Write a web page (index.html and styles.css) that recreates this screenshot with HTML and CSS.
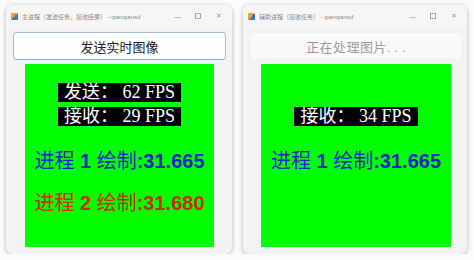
FILE: index.html
```html
<!DOCTYPE html>
<html lang="zh-CN">
<head>
    <meta charset="UTF-8">
    <title>进程窗口</title>
    <link rel="stylesheet" href="styles.css">
</head>
<body>
    <div class="desktop">
        <div class="window main">
            <div class="titlebar">
                <span class="app-icon"></span>
                <span class="title">主进程（发送任务，接收结果） - qianqiansd</span>
                <span class="controls">
                    <span class="ctl">&#8212;</span>
                    <span class="ctl box"></span>
                    <span class="ctl">&#10005;</span>
                </span>
            </div>
            <div class="client">
                <button class="action">发送实时图像</button>
                <div class="canvas">
                    <div class="fps">发送： 62 FPS</div>
                    <div class="fps">接收： 29 FPS</div>
                    <div class="draw blue"><span class="cjk">进程</span> 1 <span class="cjk">绘制</span>:31.665</div>
                    <div class="draw red"><span class="cjk">进程</span> 2 <span class="cjk">绘制</span>:31.680</div>
                </div>
            </div>
        </div>

        <div class="window worker">
            <div class="titlebar">
                <span class="app-icon"></span>
                <span class="title">辅助进程（接收任务） - qianqiansd</span>
                <span class="controls">
                    <span class="ctl">&#8212;</span>
                    <span class="ctl box"></span>
                    <span class="ctl">&#10005;</span>
                </span>
            </div>
            <div class="client">
                <button class="action busy" disabled>正在处理图片. . .</button>
                <div class="canvas">
                    <div class="fps empty"></div>
                    <div class="fps">接收： 34 FPS</div>
                    <div class="draw blue"><span class="cjk">进程</span> 1 <span class="cjk">绘制</span>:31.665</div>
                </div>
            </div>
        </div>
    </div>
</body>
</html>
```

FILE: styles.css
```css
* {
    margin: 0;
    padding: 0;
    box-sizing: border-box;
}

body {
    background-color: #fbfbfb;
    font-family: "Liberation Sans", "Noto Sans CJK SC", sans-serif;
}

.desktop {
    display: flex;
    gap: 11px;
    padding: 5px 0 0 6px;
}

.window {
    width: 226px;
    height: 249px;
    background-color: #f3f3f3;
    border-radius: 7px;
    box-shadow: 0 1px 5px rgba(0, 0, 0, 0.28);
    display: flex;
    flex-direction: column;
}

.worker {
    width: 224px;
}

.titlebar {
    height: 22px;
    display: flex;
    align-items: center;
    padding: 0 6px 0 5px;
    background-color: #f6f6f6;
    border-radius: 7px 7px 0 0;
}

.app-icon {
    width: 7px;
    height: 7px;
    margin-right: 4px;
    background: linear-gradient(135deg, #e8a33c 0 50%, #3a78c8 50% 100%);
    border-radius: 1px;
}

.title {
    font-size: 6px;
    color: #8a8a8a;
    flex: 1;
    white-space: nowrap;
}

.controls {
    display: flex;
    gap: 14px;
    align-items: center;
    padding-right: 4px;
}

.ctl {
    font-size: 7px;
    color: #9a9a9a;
    width: 7px;
    text-align: center;
}

.ctl.box {
    height: 6px;
    border: 1px solid #a8a8a8;
    width: 6px;
}

.client {
    flex: 1;
    display: flex;
    flex-direction: column;
    align-items: center;
    padding: 0 6px 7px 7px;
}

.worker .client {
    padding: 0 5px 7px 7px;
}

.action {
    width: 100%;
    height: 28px;
    background-color: #fdfdfd;
    border: 1px solid #a9bccd;
    border-bottom-color: #8ea4bb;
    border-radius: 4px;
    font-family: "Liberation Serif", "Noto Sans CJK SC", serif;
    font-size: 13px;
    color: #222;
    margin-top: 5px;
}

.action.busy {
    background-color: #f9f9f9;
    border-color: #f1f1f1;
    color: #9c9c9c;
    letter-spacing: 0.5px;
}

.canvas {
    width: 189px;
    flex: 1;
    margin-top: 4px;
    background-color: #00ff00;
    display: flex;
    flex-direction: column;
    align-items: center;
    padding-top: 19px;
}

.worker .canvas {
    width: 190px;
}

.fps {
    background-color: #000;
    color: #fff;
    font-family: "Liberation Serif", "Noto Sans CJK SC", serif;
    font-size: 18px;
    line-height: 19px;
    height: 19px;
    padding: 0 6px;
    margin-bottom: 5px;
    white-space: pre;
}

.fps.empty {
    visibility: hidden;
    width: 10px;
}

.draw {
    font-size: 20px;
    font-weight: bold;
    line-height: 24px;
    white-space: nowrap;
}

.draw .cjk {
    font-weight: 400;
}

.blue {
    color: #1d22c6;
    margin-top: 18px;
}

.red {
    color: #cf2a00;
    margin-top: 18px;
}
```
